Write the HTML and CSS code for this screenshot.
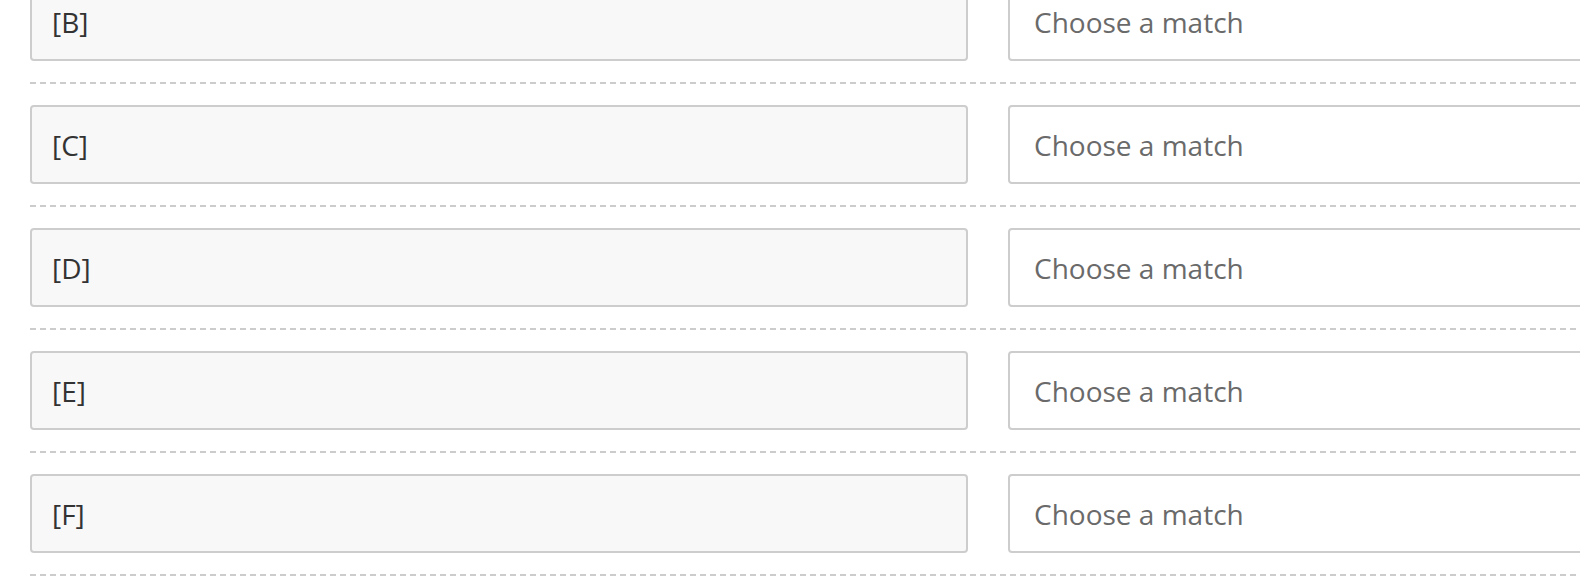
FILE: index.html
```html
<!DOCTYPE html>
<html>
<head>
	<title>Match the items</title>
	<link rel="stylesheet" href="styles.css">
</head>
<body>
	<div class="match-list">
		<div class="match-row">
			<div class="match-stem">[B]</div>
			<select class="match-select"><option>Choose a match</option></select>
		</div>
		<div class="match-row">
			<div class="match-stem">[C]</div>
			<select class="match-select"><option>Choose a match</option></select>
		</div>
		<div class="match-row">
			<div class="match-stem">[D]</div>
			<select class="match-select"><option>Choose a match</option></select>
		</div>
		<div class="match-row">
			<div class="match-stem">[E]</div>
			<select class="match-select"><option>Choose a match</option></select>
		</div>
		<div class="match-row">
			<div class="match-stem">[F]</div>
			<select class="match-select"><option>Choose a match</option></select>
		</div>
	</div>
</body>
</html>
```

FILE: styles.css
```css
/* Page */
body {
	margin: 0;
	overflow: hidden;
	background-color: #fff;
	font-family: "Open Sans", "Liberation Sans", sans-serif;
}

/* List, scrolled so row B is cut at the top */
.match-list {
	margin: -39px 0 0 30px;
	width: 1920px;
}

.match-row {
	display: flex;
	gap: 40px;
	padding: 21px 0 23px 0;
	background: repeating-linear-gradient(to right, #cccccc 0 6px, transparent 6px 10px) left bottom / 100% 2px no-repeat;
}

/* Left item box */
.match-stem {
	flex: 1;
	box-sizing: border-box;
	height: 79px;
	display: flex;
	align-items: center;
	padding-left: 20px;
	background-color: #f8f8f8;
	border: 2px solid #cdcdcd;
	border-radius: 4px;
	color: #333;
	font-size: 28px;
}

/* Right dropdown */
.match-select {
	flex: 1;
	box-sizing: border-box;
	height: 79px;
	padding-left: 24px;
	background-color: #fff;
	border: 2px solid #cdcdcd;
	border-radius: 4px;
	color: #6a6a6a;
	font-family: "Open Sans", "Liberation Sans", sans-serif;
	font-size: 28px;
	-webkit-appearance: none;
	appearance: none;
}
```
